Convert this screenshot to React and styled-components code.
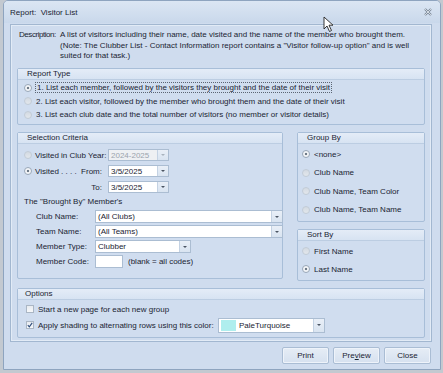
import React from 'react';
import styled, { createGlobalStyle } from 'styled-components';

const GlobalStyle = createGlobalStyle`
  html, body { margin: 0; padding: 0; }
  body {
    width: 443px;
    height: 373px;
    overflow: hidden;
    background: #c3c9d0;
    font-family: "Liberation Sans", Arial, sans-serif;
    font-size: 8px;
    color: #1a2432;
  }
`;

/* window chrome */

const Window = styled.div`
  position: relative;
  box-sizing: border-box;
  margin-left: 3px;
  width: 438px;
  height: 370px;
  border: 1px solid #8ea4bf;
  border-radius: 5px 5px 0 0;
  background: #cfdcee;
  display: flex;
  flex-direction: column;
`;

const TitleBar = styled.div`
  height: 22px;
  display: flex;
  align-items: center;
  justify-content: space-between;
  padding: 0 8px 0 6px;
  background: linear-gradient(#dbe6f3, #c9d8eb);
  border-radius: 4px 4px 0 0;
`;

const Title = styled.span`
  font-size: 8px;
  white-space: pre;
`;

const Frame = styled.div`
  box-sizing: border-box;
  height: 318px;
  margin: 1px 8px 0 6px;
  padding: 5px 6px 0 6px;
  border: 1px solid #a2b7d0;
  box-shadow: inset 0 0 0 1px #e2ebf6;
  display: flex;
  flex-direction: column;
`;

/* description */

const Description = styled.div`
  display: flex;
  padding-left: 2px;
  line-height: 10.5px;
  height: 34px;
`;

const DescLabel = styled.div`
  width: 41px;
  flex: none;
  letter-spacing: -0.45px;
`;

const DescText = styled.div`
  white-space: nowrap;
`;

/* group boxes */

const Group = styled.div`
  box-sizing: border-box;
  height: ${(p) => p.$h}px;
  margin-top: ${(p) => p.$mt || 0}px;
  border: 1px solid #a8bed8;
  border-radius: 2px;
  background: #d0ddef;
  display: flex;
  flex-direction: column;
`;

const GroupHeader = styled.div`
  height: 10px;
  line-height: 10px;
  padding-left: ${(p) => p.$pl || 9}px;
  background: linear-gradient(#e4ecf7, #d7e3f2);
  border-bottom: 1px solid #bccde2;
`;

const GroupBody = styled.div`
  padding: ${(p) => p.$pt || 0}px 0 0 ${(p) => p.$pl || 6}px;
  display: flex;
  flex-direction: column;
`;

const MiddleRow = styled.div`
  display: flex;
  gap: 14px;
  margin-top: 7px;
`;

const Column = styled.div`
  width: ${(p) => p.$w}px;
  display: flex;
  flex-direction: column;
`;

/* option rows */

const OptionRow = styled.div`
  height: ${(p) => p.$h}px;
  display: flex;
  align-items: center;
  gap: 4px;
`;

const Radio = styled.span`
  box-sizing: border-box;
  width: 8px;
  height: 8px;
  flex: none;
  border-radius: 50%;
  border: 1px solid ${(p) => (p.$checked ? '#9aa8b8' : '#c2ccd7')};
  background: ${(p) =>
    p.$checked
      ? 'radial-gradient(circle, #6f7b88 0 1.3px, #f4f6f9 1.6px)'
      : 'linear-gradient(#d3dae2, #e2e7ec)'};
`;

const Check = styled.span`
  box-sizing: border-box;
  width: 8px;
  height: 8px;
  flex: none;
  border: 1px solid #aab6c4;
  background: linear-gradient(#e7ebf0, #f6f8fa);
  display: flex;
  align-items: center;
  justify-content: center;
`;

const FocusText = styled.span`
  outline: 1px dotted #5b6573;
  outline-offset: 0;
  padding: 0 1px;
`;

/* fields */

const FieldRow = styled.div`
  height: ${(p) => p.$h}px;
  display: flex;
  align-items: center;
`;

const LeftPart = styled.div`
  width: ${(p) => p.$w}px;
  flex: none;
  display: flex;
  align-items: center;
  gap: 3px;
  padding-left: ${(p) => p.$pl || 0}px;
  box-sizing: border-box;
`;

const RightLabel = styled.span`
  margin-left: auto;
  margin-right: 6px;
`;

const Combo = styled.div`
  box-sizing: border-box;
  width: ${(p) => p.$w}px;
  height: ${(p) => p.$h || 12}px;
  flex: none;
  display: flex;
  border: 1px solid #abbdd2;
  background: ${(p) => (p.$disabled ? '#eef0f3' : '#ffffff')};
  color: ${(p) => (p.$disabled ? '#9aa3ad' : 'inherit')};
`;

const ComboText = styled.div`
  flex: 1;
  padding-left: 2px;
  display: flex;
  align-items: center;
  gap: 3px;
  white-space: nowrap;
  overflow: hidden;
`;

const ComboButton = styled.div`
  width: 10px;
  flex: none;
  border-left: 1px solid #c4d2e3;
  background: linear-gradient(#e9eff7, #d9e4f1);
  display: flex;
  align-items: center;
  justify-content: center;
`;

const Arrow = styled.span`
  width: 0;
  height: 0;
  border-left: 2px solid transparent;
  border-right: 2px solid transparent;
  border-top: 2px solid ${(p) => (p.$disabled ? '#a9b3be' : '#4b5563')};
`;

const Swatch = styled.span`
  width: 15px;
  height: 11px;
  background: #afeeee;
  flex: none;
`;

const TextBox = styled.div`
  box-sizing: border-box;
  width: 28px;
  height: 13px;
  border: 1px solid #abbdd2;
  background: #fff;
  margin-right: 5px;
`;

const SubHeading = styled.div`
  height: 14px;
  line-height: 14px;
`;

/* buttons */

const ButtonBar = styled.div`
  display: flex;
  justify-content: flex-end;
  gap: 4px;
  margin: 5px 9px 0 0;
`;

const Button = styled.button`
  box-sizing: border-box;
  width: 47px;
  height: 17px;
  padding: 0;
  border: 1px solid #aabdd4;
  border-radius: 2px;
  background: linear-gradient(#e6edf6, #d6e1ef);
  box-shadow: inset 0 0 0 1px #eef3fa;
  font-family: inherit;
  font-size: 8px;
  color: #1a2432;
`;

const Cursor = styled.svg`
  position: absolute;
  left: 319px;
  top: 15px;
`;

const ComboBox = ({ w, h, value, disabled, swatch }) => (
  <Combo $w={w} $h={h} $disabled={disabled}>
    <ComboText>
      {swatch && <Swatch />}
      {value}
    </ComboText>
    <ComboButton>
      <Arrow $disabled={disabled} />
    </ComboButton>
  </Combo>
);

const CloseGlyph = () => (
  <svg width="8" height="8" viewBox="0 0 8 8">
    <path d="M1 1 L7 7 M7 1 L1 7" stroke="#7d8a99" strokeWidth="2.2" />
    <path d="M1 1 L7 7 M7 1 L1 7" stroke="#e9eef4" strokeWidth="0.8" />
  </svg>
);

const Tick = () => (
  <svg width="6" height="6" viewBox="0 0 6 6">
    <path d="M0.8 3.2 L2.3 4.8 L5.2 0.9" stroke="#2b4a7a" strokeWidth="1.1" fill="none" />
  </svg>
);

export default function App() {
  return (
    <>
      <GlobalStyle />
      <Window>
        <TitleBar>
          <Title>Report:  Visitor List</Title>
          <CloseGlyph />
        </TitleBar>

        <Frame>
          <Description>
            <DescLabel>Description:</DescLabel>
            <DescText>
              A list of visitors including their name, date visited and the name of the member who brought them.
              <br />
              (Note: The Clubber List - Contact Information report contains a "Visitor follow-up option" and is well
              <br />
              suited for that task.)
            </DescText>
          </Description>

          <Group $h={57} $mt={4}>
            <GroupHeader>Report Type</GroupHeader>
            <GroupBody $pt={1}>
              <OptionRow $h={13.5}>
                <Radio $checked />
                <FocusText>1. List each member, followed by the visitors they brought and the date of their visit</FocusText>
              </OptionRow>
              <OptionRow $h={13.5}>
                <Radio />
                <span>2. List each visitor, followed by the member who brought them and the date of their visit</span>
              </OptionRow>
              <OptionRow $h={13.5}>
                <Radio />
                <span>3. List each club date and the total number of visitors  (no member or visitor details)</span>
              </OptionRow>
            </GroupBody>
          </Group>

          <MiddleRow>
            <Group $h={147} style={{ width: 266 }}>
              <GroupHeader>Selection Criteria</GroupHeader>
              <GroupBody $pt={3}>
                <FieldRow $h={16}>
                  <LeftPart $w={84}>
                    <Radio />
                    <span>Visited in Club Year:</span>
                  </LeftPart>
                  <ComboBox w={61} value="2024-2025" disabled />
                </FieldRow>
                <FieldRow $h={16}>
                  <LeftPart $w={84}>
                    <Radio $checked />
                    <span>Visited . . . .</span>
                    <RightLabel>From:</RightLabel>
                  </LeftPart>
                  <ComboBox w={61} value="3/5/2025" />
                </FieldRow>
                <FieldRow $h={16}>
                  <LeftPart $w={84}>
                    <RightLabel>To:</RightLabel>
                  </LeftPart>
                  <ComboBox w={61} value="3/5/2025" />
                </FieldRow>
                <SubHeading>The "Brought By" Member's</SubHeading>
                <FieldRow $h={15}>
                  <LeftPart $w={71} $pl={12}>Club Name:</LeftPart>
                  <ComboBox w={188} h={13} value="(All Clubs)" />
                </FieldRow>
                <FieldRow $h={15}>
                  <LeftPart $w={71} $pl={12}>Team Name:</LeftPart>
                  <ComboBox w={188} h={13} value="(All Teams)" />
                </FieldRow>
                <FieldRow $h={15}>
                  <LeftPart $w={71} $pl={12}>Member Type:</LeftPart>
                  <ComboBox w={96} h={13} value="Clubber" />
                </FieldRow>
                <FieldRow $h={15}>
                  <LeftPart $w={71} $pl={12}>Member Code:</LeftPart>
                  <TextBox />
                  <span>(blank = all codes)</span>
                </FieldRow>
              </GroupBody>
            </Group>

            <Column $w={129}>
              <Group $h={90}>
                <GroupHeader>Group By</GroupHeader>
                <GroupBody $pt={1} $pl={4}>
                  <OptionRow $h={18.5}>
                    <Radio $checked />
                    <span>&lt;none&gt;</span>
                  </OptionRow>
                  <OptionRow $h={18.5}>
                    <Radio />
                    <span>Club Name</span>
                  </OptionRow>
                  <OptionRow $h={18.5}>
                    <Radio />
                    <span>Club Name, Team Color</span>
                  </OptionRow>
                  <OptionRow $h={18.5}>
                    <Radio />
                    <span>Club Name, Team Name</span>
                  </OptionRow>
                </GroupBody>
              </Group>
              <Group $h={52} $mt={7}>
                <GroupHeader>Sort By</GroupHeader>
                <GroupBody $pt={1} $pl={4}>
                  <OptionRow $h={18}>
                    <Radio />
                    <span>First Name</span>
                  </OptionRow>
                  <OptionRow $h={18}>
                    <Radio $checked />
                    <span>Last Name</span>
                  </OptionRow>
                </GroupBody>
              </Group>
            </Column>
          </MiddleRow>

          <Group $h={50} $mt={7}>
            <GroupHeader $pl={7}>Options</GroupHeader>
            <GroupBody $pt={1} $pl={8}>
              <OptionRow $h={16}>
                <Check />
                <span>Start a new page for each new group</span>
              </OptionRow>
              <OptionRow $h={16}>
                <Check>
                  <Tick />
                </Check>
                <span style={{ width: 176 }}>Apply shading to alternating rows using this color:</span>
                <ComboBox w={107} h={15} value="PaleTurquoise" swatch />
              </OptionRow>
            </GroupBody>
          </Group>
        </Frame>

        <ButtonBar>
          <Button>Print</Button>
          <Button>
            Pre<u>v</u>iew
          </Button>
          <Button>Close</Button>
        </ButtonBar>

        <Cursor width="11" height="17" viewBox="0 0 11 17">
          <path d="M1 1 L1 13 L4 10 L6.5 15.5 L8.5 14.5 L6 9.2 L10 9.2 Z" fill="#fff" stroke="#222" strokeWidth="0.9" />
        </Cursor>
      </Window>
    </>
  );
}
